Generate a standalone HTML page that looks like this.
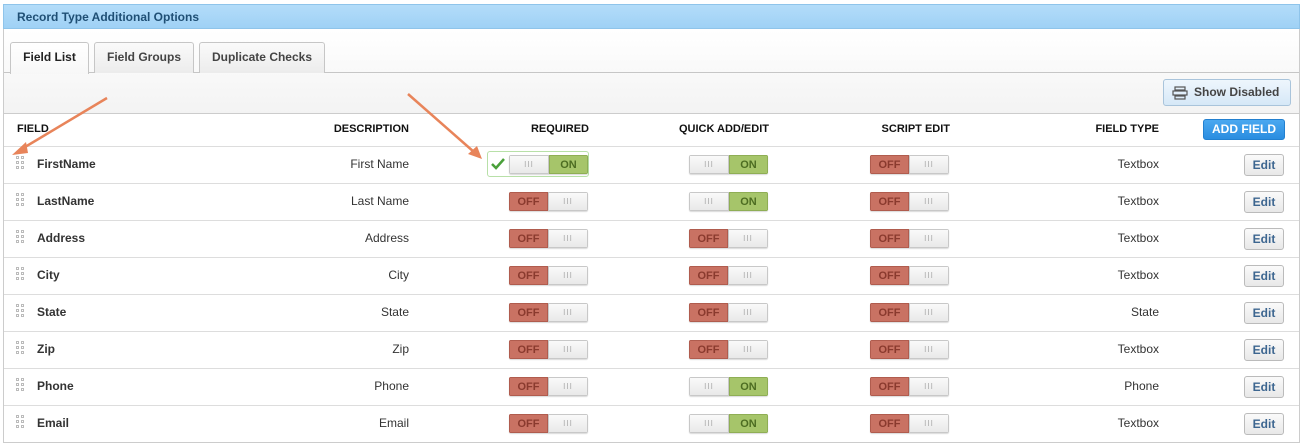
<!DOCTYPE html>
<html><head><style>
body{margin:0;width:1304px;height:447px;background:#fff;font-family:"Liberation Sans",sans-serif;position:relative;overflow:hidden}
.a{position:absolute}
.hdr{left:3px;top:4px;width:1297px;height:25px;background:linear-gradient(#b3dcf9,#9fd1f5);border:1px solid #8fc4ea;font-size:12px;font-weight:bold;color:#1f4f75;line-height:25px;padding-left:13px;box-sizing:border-box}
.box{left:3px;top:29px;width:1297px;height:414px;border:1px solid #ccc;border-top:none;box-sizing:border-box}
.tab{top:42px;height:31px;border:1px solid #c6c6c6;border-bottom:none;border-radius:3px 3px 0 0;background:linear-gradient(#fafafa,#ececec);font-size:12px;font-weight:bold;color:#444;text-align:center;line-height:29px;box-sizing:border-box}
.line{left:4px;width:1295px;height:1px;background:#ddd}
.th{top:123px;font-size:11px;font-weight:bold;color:#111}
.nm{font-size:12px;font-weight:bold;color:#333}
.tx{font-size:12px;color:#333}
.tg{width:79px;height:19px;border-radius:2px;overflow:hidden;display:flex;font-size:11px;font-weight:bold;box-shadow:0 1px 1px rgba(0,0,0,.15)}
.off{width:39px;background:#c97263;color:#8a3a2e;text-align:center;line-height:19px;border:1px solid #b05c4e;box-sizing:border-box}
.on{width:39px;background:#a6c56a;color:#4d6d22;text-align:center;line-height:19px;border:1px solid #8fae55;box-sizing:border-box}
.gr{flex:1;background:linear-gradient(#fafafa,#e9e9e9);border:1px solid #c8c8c8;box-sizing:border-box;color:#aaa;text-align:center;line-height:17px;font-size:8px;font-weight:normal;letter-spacing:1px}
.ed{left:1244px;width:40px;height:22px;border:1px solid #bbb;border-radius:3px;background:linear-gradient(#fafafa,#e8e8e8);font-size:12px;font-weight:bold;color:#3d6690;text-align:center;line-height:21px;box-sizing:border-box}
.dr{left:16px;width:9px;height:14px}
</style></head><body>
<div class="a hdr">Record Type Additional Options</div>
<div class="a box"></div>
<div class="a" style="left:4px;top:30px;width:1295px;height:84px;background:linear-gradient(#fff,#f3f3f3)"></div>
<div class="a" style="left:4px;top:72px;width:1295px;height:1px;background:#c6c6c6"></div>
<div class="a tab" style="left:10px;width:79px;background:linear-gradient(#fff,#f7f7f7);height:32px;color:#222">Field List</div>
<div class="a tab" style="left:94px;width:100px">Field Groups</div>
<div class="a tab" style="left:199px;width:126px">Duplicate Checks</div>
<div class="a" style="left:1163px;top:79px;width:128px;height:27px;border:1px solid #a9c4db;border-radius:3px;background:linear-gradient(#eef6fd,#d6e8f7);box-sizing:border-box;font-size:12px;font-weight:bold;color:#444;line-height:25px;padding-left:30px">Show Disabled
<svg class="a" style="left:8px;top:6px" width="16" height="14" viewBox="0 0 16 14"><rect x="3" y="1" width="10" height="3" fill="none" stroke="#555" stroke-width="1.2"/><rect x="1" y="5" width="14" height="4" fill="none" stroke="#555" stroke-width="1.2"/><rect x="3" y="10" width="10" height="3" fill="none" stroke="#555" stroke-width="1.2"/></svg></div>
<div class="a line" style="top:113px;background:#ccc"></div>
<div class="a th" style="left:17px">FIELD</div>
<div class="a th" style="left:300px;width:109px;text-align:right">DESCRIPTION</div>
<div class="a th" style="left:480px;width:109px;text-align:right">REQUIRED</div>
<div class="a th" style="left:640px;width:129px;text-align:right">QUICK ADD/EDIT</div>
<div class="a th" style="left:840px;width:110px;text-align:right">SCRIPT EDIT</div>
<div class="a th" style="left:1050px;width:109px;text-align:right">FIELD TYPE</div>
<div class="a" style="left:1203px;top:119px;width:82px;height:21px;background:linear-gradient(#4aa8f0,#2a8de0);border:1px solid #2280d0;border-radius:3px;box-sizing:border-box;color:#fff;font-size:12px;font-weight:bold;text-align:center;line-height:19px">ADD FIELD</div>
<div id="rows"></div>
<svg class="a" style="left:0;top:0" width="1304" height="447"><g stroke="#e8845a" stroke-width="2.5" fill="#e8845a"><line x1="107" y1="98" x2="20" y2="150"/><polygon points="12,155 26,142 28,153" stroke="none"/><line x1="408" y1="94" x2="474" y2="152"/><polygon points="482,159 468,154 477,146" stroke="none"/></g></svg>
<script>
var d=[["FirstName","First Name",1,1,0,"Textbox"],["LastName","Last Name",0,1,0,"Textbox"],["Address","Address",0,0,0,"Textbox"],["City","City",0,0,0,"Textbox"],["State","State",0,0,0,"State"],["Zip","Zip",0,0,0,"Textbox"],["Phone","Phone",0,1,0,"Phone"],["Email","Email",0,1,0,"Textbox"]];
function tg(x,y,on){return '<div class="a tg" style="left:'+x+'px;top:'+y+'px">'+(on?'<div class="gr">III</div><div class="on">ON</div>':'<div class="off">OFF</div><div class="gr">III</div>')+'</div>';}
var h='';
d.forEach(function(r,i){var t=146+i*37;
if(i>0)h+='<div class="a line" style="top:'+t+'px"></div>'; else h+='<div class="a line" style="top:146px"></div>';
h+='<svg class="a dr" style="top:'+(t+10)+'px" width="9" height="14"><g fill="none" stroke="#bbb" stroke-width="1"><rect x="0.5" y="0.5" width="2" height="2"/><rect x="5.5" y="0.5" width="2" height="2"/><rect x="0.5" y="5.5" width="2" height="2"/><rect x="5.5" y="5.5" width="2" height="2"/><rect x="0.5" y="10.5" width="2" height="2"/><rect x="5.5" y="10.5" width="2" height="2"/></g></svg>';
h+='<div class="a nm" style="left:37px;top:'+(t+11)+'px">'+r[0]+'</div>';
h+='<div class="a tx" style="left:250px;width:159px;text-align:right;top:'+(t+11)+'px">'+r[1]+'</div>';
if(i==0)h+='<div class="a" style="left:487px;top:151px;width:102px;height:26px;border:1px solid #b8e0a8;border-radius:3px;box-sizing:border-box"></div><svg class="a" style="left:491px;top:158px" width="14" height="12"><path d="M1 6 L5 10 L13 1" stroke="#4aa03a" stroke-width="2.5" fill="none"/></svg>';
h+=tg(509,t+9,r[2])+tg(689,t+9,r[3])+tg(870,t+9,r[4]);
h+='<div class="a tx" style="left:1050px;width:109px;text-align:right;top:'+(t+11)+'px">'+r[5]+'</div>';
h+='<div class="a ed" style="top:'+(t+8)+'px">Edit</div>';});
document.getElementById('rows').innerHTML=h;
</script>
</body></html>
